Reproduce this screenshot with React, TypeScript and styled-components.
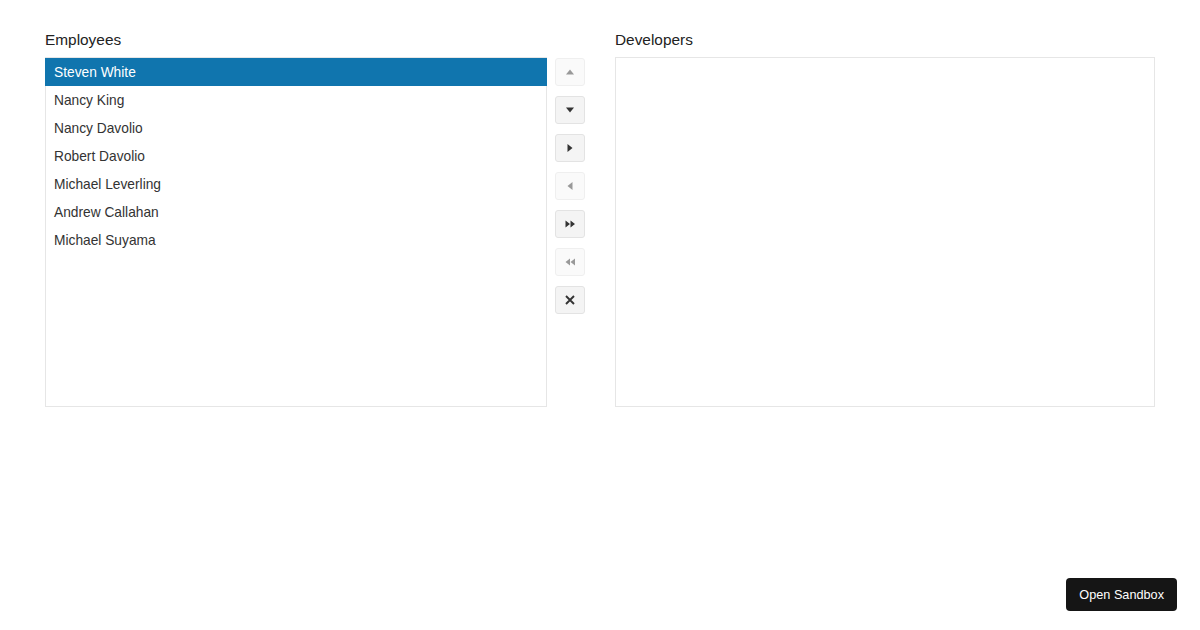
import React from "react";
import styled, { createGlobalStyle } from "styled-components";

const Global = createGlobalStyle`
  html, body { margin: 0; padding: 0; background: #fff; }
  body { font-family: "Liberation Sans", Arial, sans-serif; color: #333; }
`;

const Page = styled.div`
  position: relative;
  width: 1200px;
  height: 630px;
  box-sizing: border-box;
  padding: 30px 45px 0 45px;
`;

const Row = styled.div`
  display: flex;
  align-items: flex-start;
`;

const Column = styled.div<{ $w: number }>`
  width: ${(p) => p.$w}px;
  display: flex;
  flex-direction: column;
`;

const Label = styled.div`
  font-size: 15.4px;
  line-height: 19px;
  color: #222;
  height: 19px;
  margin-bottom: 8px;
`;

const ListBox = styled.div`
  height: 350px;
  border: 1px solid #e6e6e6;
  box-sizing: border-box;
  display: flex;
  flex-direction: column;
`;

const Item = styled.div<{ $selected?: boolean }>`
  box-sizing: border-box;
  height: 28px;
  padding-top: 2px;
  line-height: 26px;
  font-size: 13.75px;
  background: ${(p) => (p.$selected ? "#1075ae" : "transparent")};
  color: ${(p) => (p.$selected ? "#fff" : "#333")};
  margin: ${(p) => (p.$selected ? "0 -1px 0 -1px" : "0")};
  padding-left: ${(p) => (p.$selected ? "9px" : "8px")};
`;

const Toolbar = styled.div`
  display: flex;
  flex-direction: column;
  gap: 10px;
  padding-top: 28px;
  margin: 0 30px 0 8px;
`;

const ToolButton = styled.button<{ $disabled?: boolean }>`
  width: 30px;
  height: 28px;
  padding: 0;
  border: 1px solid ${(p) => (p.$disabled ? "#efefef" : "#e3e3e3")};
  border-radius: 3px;
  background: ${(p) => (p.$disabled ? "#fafafa" : "#f4f4f4")};
  display: flex;
  align-items: center;
  justify-content: center;
  color: ${(p) => (p.$disabled ? "#999" : "#333")};
  cursor: pointer;
`;

const Sandbox = styled.button`
  position: absolute;
  right: 23px;
  bottom: 19px;
  height: 33px;
  padding: 0 13px;
  border: none;
  border-radius: 4px;
  background: #151515;
  color: #fff;
  font-family: "Liberation Sans", Arial, sans-serif;
  font-size: 12.7px;
`;

const Up = () => (
  <svg width="8" height="6" viewBox="0 0 8 6"><path d="M0 5.5 L4 0.5 L8 5.5 Z" fill="currentColor" /></svg>
);
const Down = () => (
  <svg width="8" height="6" viewBox="0 0 8 6"><path d="M0 0.5 L4 5.5 L8 0.5 Z" fill="currentColor" /></svg>
);
const Right = () => (
  <svg width="6" height="8" viewBox="0 0 6 8"><path d="M0.5 0 L5.5 4 L0.5 8 Z" fill="currentColor" /></svg>
);
const Left = () => (
  <svg width="6" height="8" viewBox="0 0 6 8"><path d="M5.5 0 L0.5 4 L5.5 8 Z" fill="currentColor" /></svg>
);
const RightAll = () => (
  <svg width="11" height="8" viewBox="0 0 11 8">
    <path d="M0.5 0.5 L5 4 L0.5 7.5 Z M5.5 0.5 L10 4 L5.5 7.5 Z" fill="currentColor" />
  </svg>
);
const LeftAll = () => (
  <svg width="11" height="8" viewBox="0 0 11 8">
    <path d="M5 0.5 L0.5 4 L5 7.5 Z M10 0.5 L5.5 4 L10 7.5 Z" fill="currentColor" />
  </svg>
);
const Close = () => (
  <svg width="10" height="10" viewBox="0 0 10 10">
    <path d="M1 1 L9 9 M9 1 L1 9" stroke="currentColor" strokeWidth="1.9" />
  </svg>
);

const employees = [
  "Steven White",
  "Nancy King",
  "Nancy Davolio",
  "Robert Davolio",
  "Michael Leverling",
  "Andrew Callahan",
  "Michael Suyama",
];

export default function App() {
  return (
    <>
      <Global />
      <Page>
        <Row>
          <Column $w={502}>
            <Label>Employees</Label>
            <ListBox>
              {employees.map((e, i) => (
                <Item key={e} $selected={i === 0}>{e}</Item>
              ))}
            </ListBox>
          </Column>
          <Toolbar>
            <ToolButton $disabled><Up /></ToolButton>
            <ToolButton><Down /></ToolButton>
            <ToolButton><Right /></ToolButton>
            <ToolButton $disabled><Left /></ToolButton>
            <ToolButton><RightAll /></ToolButton>
            <ToolButton $disabled><LeftAll /></ToolButton>
            <ToolButton><Close /></ToolButton>
          </Toolbar>
          <Column $w={540}>
            <Label>Developers</Label>
            <ListBox />
          </Column>
        </Row>
        <Sandbox>Open Sandbox</Sandbox>
      </Page>
    </>
  );
}
